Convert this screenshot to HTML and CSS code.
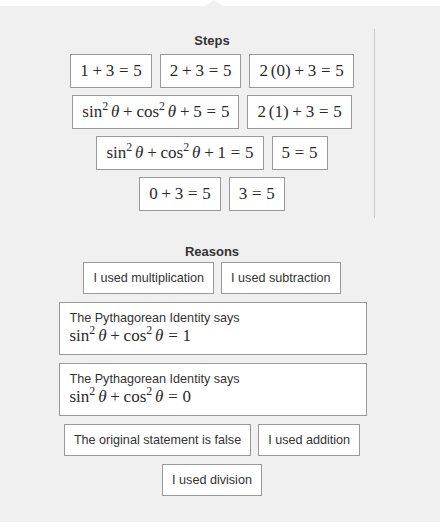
FILE: index.html
```html
<!DOCTYPE html>
<html>
<head>
<meta charset="utf-8">
<link rel="stylesheet" href="styles.css">
</head>
<body>
<div class="strip"><div class="notch"></div></div>
<div class="panel">
  <section class="steps">
    <h2 class="title">Steps</h2>
    <div class="row">
      <div class="step"><span class="m">1<span class="bin">+</span>3<span class="rel">=</span>5</span></div>
      <div class="step"><span class="m">2<span class="bin">+</span>3<span class="rel">=</span>5</span></div>
      <div class="step"><span class="m">2<span class="th">(</span>0)<span class="bin">+</span>3<span class="rel">=</span>5</span></div>
    </div>
    <div class="row">
      <div class="step"><span class="m">sin<sup>2</sup><i class="th">θ</i><span class="bin">+</span>cos<sup>2</sup><i class="th">θ</i><span class="bin">+</span>5<span class="rel">=</span>5</span></div>
      <div class="step"><span class="m">2<span class="th">(</span>1)<span class="bin">+</span>3<span class="rel">=</span>5</span></div>
    </div>
    <div class="row">
      <div class="step"><span class="m">sin<sup>2</sup><i class="th">θ</i><span class="bin">+</span>cos<sup>2</sup><i class="th">θ</i><span class="bin">+</span>1<span class="rel">=</span>5</span></div>
      <div class="step"><span class="m">5<span class="rel">=</span>5</span></div>
    </div>
    <div class="row">
      <div class="step"><span class="m">0<span class="bin">+</span>3<span class="rel">=</span>5</span></div>
      <div class="step"><span class="m">3<span class="rel">=</span>5</span></div>
    </div>
  </section>
  <section class="reasons">
    <h2 class="title">Reasons</h2>
    <div class="reason-list">
      <div class="reason">I used multiplication</div>
      <div class="reason">I used subtraction</div>
      <div class="reason wide">
        <div class="line">The Pythagorean Identity says</div>
        <div class="mline"><span class="m">sin<sup>2</sup><i class="th">θ</i><span class="bin">+</span>cos<sup>2</sup><i class="th">θ</i><span class="rel">=</span>1</span></div>
      </div>
      <div class="reason wide">
        <div class="line">The Pythagorean Identity says</div>
        <div class="mline"><span class="m">sin<sup>2</sup><i class="th">θ</i><span class="bin">+</span>cos<sup>2</sup><i class="th">θ</i><span class="rel">=</span>0</span></div>
      </div>
      <div class="reason">The original statement is false</div>
      <div class="reason">I used addition</div>
      <div class="reason">I used division</div>
    </div>
  </section>
</div>
</body>
</html>
```
FILE: styles.css
```css
html, body {
  margin: 0;
  padding: 0;
  background: #ffffff;
}
body {
  font-family: "Liberation Sans", Arial, sans-serif;
  color: #333333;
  width: 441px;
}
.strip {
  height: 6px;
  display: flex;
  align-items: flex-end;
}
.notch {
  width: 0;
  height: 0;
  margin-left: 205px;
  border-left: 9px solid transparent;
  border-right: 9px solid transparent;
  border-bottom: 6px solid #f0f0f0;
}
.panel {
  background: #f0f0f0;
  width: 440px;
  height: 516px;
  box-sizing: border-box;
  padding-top: 23px;
}
.title {
  margin: 0;
  font-size: 13px;
  line-height: 16px;
  font-weight: bold;
  text-align: center;
  color: #333333;
}
.steps {
  margin-left: 50px;
  width: 324px;
  border-right: 1px solid #cccccc;
  padding: 4px 0 7px;
  display: flex;
  flex-direction: column;
  gap: 7px;
}
.steps .title {
  margin-bottom: -2px;
}
.row {
  display: flex;
  justify-content: center;
  gap: 8px;
}
.step {
  background: #ffffff;
  border: 1px solid #999999;
  padding: 6px 9px;
  height: 20px;
  line-height: 20px;
  white-space: nowrap;
}
.m {
  font-family: "Liberation Serif", "Times New Roman", serif;
  font-size: 17px;
  color: #2a2a2a;
}
.m sup {
  font-size: 0.7em;
  line-height: 0;
  vertical-align: 0.55em;
}
.th {
  margin-left: 0.167em;
  font-style: normal;
}
i.th {
  font-style: italic;
}
.bin {
  margin: 0 0.222em;
}
.rel {
  margin: 0 0.278em;
}
.reasons {
  margin-left: 50px;
  width: 324px;
  margin-top: 26px;
}
.reasons .title {
  margin-bottom: 2px;
}
.reason-list {
  display: flex;
  flex-wrap: wrap;
  justify-content: center;
  gap: 8px 7px;
}
.reason {
  background: #ffffff;
  border: 1px solid #999999;
  padding: 7px 9px;
  font-size: 12.6px;
  line-height: 16px;
  white-space: nowrap;
}
.reason.wide {
  width: 286px;
  padding: 7px 10px 7px 10px;
  margin-left: 1px;
}
.mline {
  line-height: 20px;
}
```
